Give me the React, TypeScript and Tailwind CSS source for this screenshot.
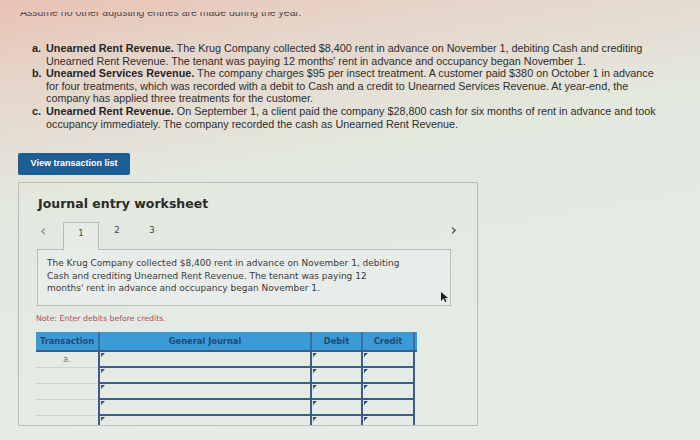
import React from "react"

const introLines = [
  { label: "a.", bold: "Unearned Rent Revenue.", rest: " The Krug Company collected $8,400 rent in advance on November 1, debiting Cash and crediting" },
  { text: "Unearned Rent Revenue. The tenant was paying 12 months' rent in advance and occupancy began November 1." },
  { label: "b.", bold: "Unearned Services Revenue.", rest: " The company charges $95 per insect treatment. A customer paid $380 on October 1 in advance" },
  { text: "for four treatments, which was recorded with a debit to Cash and a credit to Unearned Services Revenue. At year-end, the" },
  { text: "company has applied three treatments for the customer." },
  { label: "c.", bold: "Unearned Rent Revenue.", rest: " On September 1, a client paid the company $28,800 cash for six months of rent in advance and took" },
  { text: "occupancy immediately. The company recorded the cash as Unearned Rent Revenue." },
]

function Marker() {
  // small triangle in the corner of each input cell
  return <span className="absolute left-[1px] top-[1px] h-0 w-0 border-l-[4px] border-b-[4px] border-l-[#2c4f7c] border-b-transparent" />
}

function JournalRow({ label }: { label?: string }) {
  return (
    <div className="flex h-[16px] shrink-0">
      <div className="flex w-[62px] items-center justify-center border-b border-[#cfd3d0] text-[8px] text-[#777]">{label}</div>
      <div className="relative w-[214px] border-x-2 border-b-2 border-[#3b5d88]">
        <Marker />
      </div>
      <div className="relative w-[51px] border-r-2 border-b-2 border-[#3b5d88]">
        <Marker />
      </div>
      <div className="relative w-[52px] border-r-2 border-b-2 border-[#3b5d88]">
        <Marker />
      </div>
    </div>
  )
}

export default function App() {
  return (
    <div className="relative h-[440px] w-[700px] overflow-hidden bg-[linear-gradient(170deg,#e9c2b3_0%,#e6d4c9_14%,#e3e9df_38%,#e3ebe4_70%,#e7ebe5_100%)] font-['Liberation_Sans',sans-serif]">
      {/* cut-off line at the very top */}
      <div className="ml-[20px] mt-[12px] h-[6px] overflow-hidden">
        <div className="mt-[-6px] text-[10.5px] leading-[12px] text-[#4a4a55]">Assume no other adjusting entries are made during the year.</div>
      </div>

      <div className="ml-[32px] mt-[24px] text-[10.8px] leading-[12.6px] text-[#2e2e2e]">
        {introLines.map((l, i) => (
          <div key={i} className="flex whitespace-nowrap">
            <span className="w-[14px] shrink-0 font-bold text-[#262626]">{l.label}</span>
            {l.text ? (
              <span>{l.text}</span>
            ) : (
              <span>
                <b className="text-[#262626]">{l.bold}</b>
                {l.rest}
              </span>
            )}
          </div>
        ))}
      </div>

      <div className="ml-[18px] mt-[23px] flex h-[22px] w-[112px] items-center justify-center rounded-[2px] bg-[#1f5e94] text-[9px] font-bold text-white">
        View transaction list
      </div>

      <div className="ml-[18px] mt-[7px] h-[244px] w-[460px] overflow-hidden border border-[#b9bdbd] font-['DejaVu_Sans',sans-serif]">
        <div className="ml-[19px] mt-[13px] text-[12.5px] font-bold leading-[16px] text-[#2b2b2b]">Journal entry worksheet</div>

        <div className="ml-[18px] mt-[10px] flex w-[414px] items-end">
          <span className="mb-[10px] w-[26px] pl-[3px] text-[16px] leading-none text-[#8c8c94]">‹</span>
          <div className="relative z-10 mb-[-1px] flex h-[28px] w-[36px] items-start justify-center border-x border-t border-[#b9bdbd] bg-[#e6ebe6] pt-[4px] text-[8.5px] text-[#444]">
            1
          </div>
          <span className="mb-[12px] w-[36px] text-center text-[8.5px] text-[#444]">2</span>
          <span className="mb-[12px] w-[34px] text-center text-[8.5px] text-[#444]">3</span>
          <span className="mb-[11px] ml-auto mr-[-6px] text-[16px] leading-none text-[#3c4250]">›</span>
        </div>

        <div className="ml-[18px] h-[57px] w-[414px] border border-[#b9bdbd] bg-[#e8ede9] px-[9px] pt-[7px] text-[9px] leading-[12.5px] text-[#3a3a3a]">
          The Krug Company collected $8,400 rent in advance on November 1, debiting
          <br />
          Cash and crediting Unearned Rent Revenue. The tenant was paying 12
          <br />
          months' rent in advance and occupancy began November 1.
        </div>

        <div className="ml-[17px] mt-[8px] text-[7.8px] leading-[10px] text-[#b24a64]">Note: Enter debits before credits.</div>

        <div className="ml-[17px] mt-[8px] flex w-[381px] flex-col">
          <div className="flex h-[18px] shrink-0 bg-[#3c9ad7] text-[8.3px] font-bold text-[#1f4a72]">
            <div className="flex w-[62px] items-center justify-center">Transaction</div>
            <div className="flex w-[214px] items-center justify-center border-x-2 border-[#3b6fa0]">General Journal</div>
            <div className="flex w-[51px] items-center justify-center border-r-2 border-[#3b6fa0]">Debit</div>
            <div className="flex w-[52px] items-center justify-center border-r-2 border-[#3b6fa0]">Credit</div>
          </div>
          <div className="border-t-2 border-[#3b5d88]">
            <JournalRow label="a." />
            <JournalRow />
            <JournalRow />
            <JournalRow />
            <JournalRow />
          </div>
        </div>
      </div>

      {/* mouse pointer */}
      <svg className="absolute left-[440px] top-[291px]" width="9" height="12" viewBox="0 0 9 12">
        <path d="M1 1 L1 10 L3.5 7.6 L5.3 11 L6.6 10.4 L4.9 7.1 L8 7 Z" fill="#1d1d22" />
      </svg>
    </div>
  )
}
